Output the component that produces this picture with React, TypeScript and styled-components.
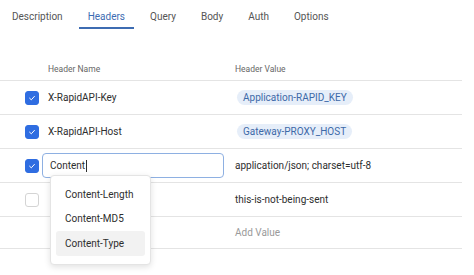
import React from "react";
import styled, { createGlobalStyle } from "styled-components";

const Global = createGlobalStyle`
  html, body { margin: 0; padding: 0; background: #ffffff; }
  body { font-family: Roboto, "Liberation Sans", Arial, sans-serif; color: #2e2e2e; }
  * { box-sizing: border-box; }
`;

const Page = styled.div`
  width: 474px;
  height: 275px;
  overflow: hidden;
  position: relative;
`;

const TabBar = styled.div`
  display: flex;
  gap: 7px;
  padding-left: 3px;
  height: 29px;
`;

const Tab = styled.div<{ $active?: boolean }>`
  display: flex;
  align-items: center;
  padding: 5px 9px 0;
  font-size: 10px;
  color: ${(p) => (p.$active ? "#3d6cb2" : "#555555")};
  border-bottom: 2px solid ${(p) => (p.$active ? "#3d6cb2" : "transparent")};
`;

const Table = styled.div`
  margin-top: 29px;
  width: 462px;
`;

const Row = styled.div<{ $h?: number }>`
  display: flex;
  align-items: center;
  height: ${(p) => (p.$h ?? 34)}px;
  border-bottom: 1px solid #e4e4e4;
`;

const CheckCell = styled.div`
  width: 42px;
  padding-left: 25px;
  display: flex;
  align-items: center;
`;

const NameCell = styled.div`
  position: relative;
  width: 186px;
  display: flex;
  align-items: center;
`;

const ValueCell = styled.div`
  flex: 1;
  padding-left: 7px;
  display: flex;
  align-items: center;
`;

const HeadLabel = styled.span<{ $pad?: number }>`
  font-size: 8.5px;
  color: #666666;
  padding-left: ${(p) => p.$pad ?? 0}px;
`;

const Text = styled.span<{ $muted?: boolean; $pad?: number }>`
  font-size: 10px;
  color: ${(p) => (p.$muted ? "#9a9a9a" : "#2e2e2e")};
  padding-left: ${(p) => p.$pad ?? 0}px;
  white-space: nowrap;
`;

const Box = styled.div<{ $checked?: boolean }>`
  width: 14px;
  height: 14px;
  border-radius: 3px;
  background: ${(p) => (p.$checked ? "#2f6de1" : "#ffffff")};
  border: 1px solid ${(p) => (p.$checked ? "#2f6de1" : "#d4d4d4")};
  display: flex;
  align-items: center;
  justify-content: center;
`;

const Pill = styled.span`
  margin-left: 2px;
  padding: 0 6px;
  height: 15px;
  line-height: 15px;
  border-radius: 8px;
  background: #e6eef9;
  color: #3d69a8;
  font-size: 10px;
  white-space: nowrap;
`;

const InputBox = styled.div`
  width: 182px;
  height: 25px;
  border: 1px solid #8eb0e2;
  border-radius: 4px;
  display: flex;
  align-items: center;
  padding-left: 7px;
  font-size: 10px;
  color: #2e2e2e;
`;

const Caret = styled.span`
  display: inline-block;
  width: 1px;
  height: 12px;
  background: #2e2e2e;
  margin-left: 1px;
`;

const Menu = styled.div`
  position: absolute;
  left: 8px;
  top: 22px;
  width: 101px;
  background: #ffffff;
  border: 1px solid #e4e4e4;
  border-radius: 4px;
  box-shadow: 0 2px 6px rgba(0, 0, 0, 0.12);
  padding: 6px 5px 8px;
  z-index: 5;
`;

const MenuItem = styled.div<{ $hl?: boolean }>`
  height: 24.5px;
  display: flex;
  align-items: center;
  padding-left: 9px;
  font-size: 10px;
  color: #2e2e2e;
  border-radius: 3px;
  background: ${(p) => (p.$hl ? "#f2f2f2" : "transparent")};
`;

const Check = () => (
  <svg width="8" height="8" viewBox="0 0 8 8">
    <path d="M1.6 4.2 L3.3 5.8 L6.4 2.4" fill="none" stroke="#ffffff" strokeWidth="1" strokeLinecap="round" strokeLinejoin="round" />
  </svg>
);

export default function App() {
  const tabs = ["Description", "Headers", "Query", "Body", "Auth", "Options"];
  return (
    <Page>
      <Global />
      <TabBar>
        {tabs.map((t) => (
          <Tab key={t} $active={t === "Headers"}>
            {t}
          </Tab>
        ))}
      </TabBar>
      <Table>
        <Row $h={23}>
          <CheckCell />
          <NameCell>
            <HeadLabel $pad={6}>Header Name</HeadLabel>
          </NameCell>
          <ValueCell>
            <HeadLabel>Header Value</HeadLabel>
          </ValueCell>
        </Row>
        <Row>
          <CheckCell>
            <Box $checked>
              <Check />
            </Box>
          </CheckCell>
          <NameCell>
            <Text $pad={6}>X-RapidAPI-Key</Text>
          </NameCell>
          <ValueCell>
            <Pill>Application-RAPID_KEY</Pill>
          </ValueCell>
        </Row>
        <Row>
          <CheckCell>
            <Box $checked>
              <Check />
            </Box>
          </CheckCell>
          <NameCell>
            <Text $pad={6}>X-RapidAPI-Host</Text>
          </NameCell>
          <ValueCell>
            <Pill>Gateway-PROXY_HOST</Pill>
          </ValueCell>
        </Row>
        <Row>
          <CheckCell>
            <Box $checked>
              <Check />
            </Box>
          </CheckCell>
          <NameCell>
            <InputBox>
              Content
              <Caret />
            </InputBox>
            <Menu>
              <MenuItem>Content-Length</MenuItem>
              <MenuItem>Content-MD5</MenuItem>
              <MenuItem $hl>Content-Type</MenuItem>
            </Menu>
          </NameCell>
          <ValueCell>
            <Text>application/json; charset=utf-8</Text>
          </ValueCell>
        </Row>
        <Row>
          <CheckCell>
            <Box />
          </CheckCell>
          <NameCell />
          <ValueCell>
            <Text>this-is-not-being-sent</Text>
          </ValueCell>
        </Row>
        <Row $h={32}>
          <CheckCell />
          <NameCell />
          <ValueCell>
            <Text $muted>Add Value</Text>
          </ValueCell>
        </Row>
      </Table>
    </Page>
  );
}
